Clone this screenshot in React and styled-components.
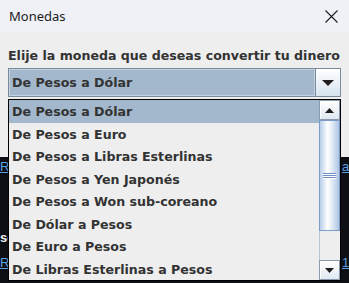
import React from "react";
import styled, { createGlobalStyle } from "styled-components";

const Global = createGlobalStyle`
  html, body { margin: 0; padding: 0; }
  body { width: 349px; height: 283px; overflow: hidden; background: #0d0f14; }
`;

const Screen = styled.div`
  width: 349px;
  height: 283px;
  display: flex;
  flex-direction: column;
  overflow: hidden;
`;

const Dialog = styled.div`
  height: 157px;
  flex: none;
  display: flex;
  flex-direction: column;
`;

const TitleBar = styled.div`
  height: 32px;
  flex: none;
  background: #eff1f7;
  display: flex;
  align-items: center;
  justify-content: space-between;
  padding: 0 11px 0 9px;
  font-family: "Noto Sans", sans-serif;
  font-size: 13px;
  color: #1b1b1b;
`;

const Body = styled.div`
  flex: 1;
  background: #eeeeee;
  padding: 16px 8px 0;
`;

const Label = styled.div`
  font-family: "DejaVu Sans", sans-serif;
  font-weight: bold;
  font-size: 12.6px;
  color: #333333;
`;

const ComboWrap = styled.div`
  position: relative;
  margin-top: 5px;
`;

const Combo = styled.div`
  height: 29px;
  box-sizing: border-box;
  border: 1px solid #7a8a99;
  display: flex;
`;

const Field = styled.div`
  flex: 1;
  background: #a3b8cc;
  box-shadow: inset 0 0 0 1px #c2d2e2;
  display: flex;
  align-items: center;
  padding-left: 3px;
  font-family: "DejaVu Sans", sans-serif;
  font-weight: bold;
  font-size: 12.6px;
  color: #333333;
`;

const ArrowButton = styled.div`
  width: 24px;
  border-left: 1px solid #7a8a99;
  background: linear-gradient(#ffffff, #d6e3f0);
  display: flex;
  align-items: center;
  justify-content: center;
`;

const Popup = styled.div`
  position: absolute;
  top: 31px;
  left: 0;
  right: 0;
  height: 182px;
  box-sizing: border-box;
  border: 1px solid #000000;
  background: #eeeeee;
  display: flex;
  z-index: 2;
`;

const List = styled.div`
  flex: 1;
  display: flex;
  flex-direction: column;
`;

const Item = styled.div`
  height: 22.5px;
  flex: none;
  box-sizing: border-box;
  padding: 1px 0 0 3px;
  display: flex;
  align-items: center;
  white-space: nowrap;
  background: ${(p) => (p.$selected ? "#a3b8cc" : "transparent")};
  font-family: "DejaVu Sans", sans-serif;
  font-weight: bold;
  font-size: 12.6px;
  color: #333333;
`;

const ScrollBar = styled.div`
  width: 21px;
  flex: none;
  display: flex;
  flex-direction: column;
  background: #eeeeee;
`;

const ScrollButton = styled.div`
  height: 20px;
  flex: none;
  box-sizing: border-box;
  border: 1px solid #8a9bb0;
  box-shadow: inset 1px 1px 0 #ffffff;
  background: linear-gradient(#ffffff, #dfe8f2);
  display: flex;
  align-items: center;
  justify-content: center;
`;

const Thumb = styled.div`
  height: 111px;
  flex: none;
  box-sizing: border-box;
  border: 1px solid #7d9bc8;
  background: linear-gradient(to right, #b8cee9 0%, #ffffff 40%, #e0eaf6 65%, #adc5e4 100%);
  display: flex;
  align-items: center;
  justify-content: center;
`;

const Grip = styled.div`
  width: 13px;
  display: flex;
  flex-direction: column;
  gap: 1px;
`;

const GripLine = styled.div`
  height: 1px;
  background: #6f8fc4;
  box-shadow: 0 1px 0 #ffffff;
`;

const Track = styled.div`
  flex: 1;
  box-sizing: border-box;
  border-left: 1px solid #b9c6d6;
  background: #eeeeee;
`;

const Desktop = styled.div`
  flex: 1;
  background: #0d0f14;
  font-family: "Liberation Sans", sans-serif;
  font-size: 13px;
  color: #e8e8e8;
`;

const DeskRow = styled.div`
  height: 16px;
  line-height: 16px;
  margin-top: ${(p) => p.$top}px;
  display: flex;
  justify-content: space-between;
  white-space: nowrap;
`;

const DeskLeft = styled.span`
  width: 8px;
  overflow: hidden;
  color: ${(p) => (p.$link ? "#5a9fe6" : "#f2f2f2")};
  text-decoration: ${(p) => (p.$link ? "underline" : "none")};
  font-weight: ${(p) => (p.$bold ? "bold" : "normal")};
`;

const DeskRight = styled.span`
  width: 7px;
  overflow: hidden;
  color: #5a9fe6;
  text-decoration: underline;
`;

const Triangle = ({ w, h, up }) => (
  <svg width={w} height={h} viewBox={`0 0 ${w} ${h}`}>
    <polygon
      points={up ? `0,${h} ${w},${h} ${w / 2},0` : `0,0 ${w},0 ${w / 2},${h}`}
      fill="#1e1e1e"
    />
  </svg>
);

const items = [
  "De Pesos a Dólar",
  "De Pesos a Euro",
  "De Pesos a Libras Esterlinas",
  "De Pesos a Yen Japonés",
  "De Pesos a Won sub-coreano",
  "De Dólar a Pesos",
  "De Euro a Pesos",
  "De Libras Esterlinas a Pesos",
];

export default function App() {
  return (
    <>
      <Global />
      <Screen>
        <Dialog>
          <TitleBar>
            <span>Monedas</span>
            <svg width="13" height="13" viewBox="0 0 13 13">
              <path d="M0.5 0.5 L12.5 12.5 M12.5 0.5 L0.5 12.5" stroke="#1b1b1b" strokeWidth="1.1" />
            </svg>
          </TitleBar>
          <Body>
            <Label>Elije la moneda que deseas convertir tu dinero</Label>
            <ComboWrap>
              <Combo>
                <Field>De Pesos a Dólar</Field>
                <ArrowButton>
                  <Triangle w={12} h={6} />
                </ArrowButton>
              </Combo>
              <Popup>
                <List>
                  {items.map((t, i) => (
                    <Item key={t} $selected={i === 0}>
                      {t}
                    </Item>
                  ))}
                </List>
                <ScrollBar>
                  <ScrollButton>
                    <Triangle w={9} h={5} up />
                  </ScrollButton>
                  <Thumb>
                    <Grip>
                      <GripLine />
                      <GripLine />
                      <GripLine />
                    </Grip>
                  </Thumb>
                  <Track />
                  <ScrollButton>
                    <Triangle w={9} h={5} />
                  </ScrollButton>
                </ScrollBar>
              </Popup>
            </ComboWrap>
          </Body>
        </Dialog>
        <Desktop>
          <DeskRow $top={2}>
            <DeskLeft $link>Re</DeskLeft>
            <DeskRight>a</DeskRight>
          </DeskRow>
          <DeskRow $top={55}>
            <DeskLeft $bold>sc</DeskLeft>
          </DeskRow>
          <DeskRow $top={9}>
            <DeskLeft $link>Re</DeskLeft>
            <DeskRight>1</DeskRight>
          </DeskRow>
        </Desktop>
      </Screen>
    </>
  );
}
